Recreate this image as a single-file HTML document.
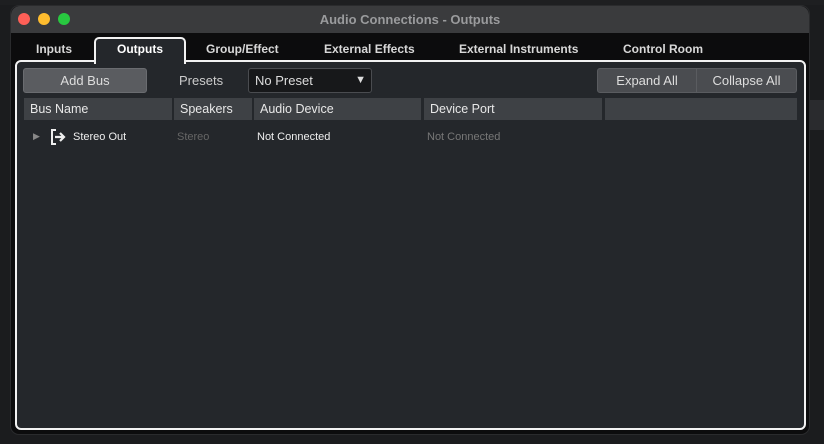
<!DOCTYPE html>
<html><head><style>
body{margin:0;width:824px;height:444px;background:#1b1c1e;font-family:"Liberation Sans",Arial,sans-serif;position:relative;overflow:hidden}
.a{position:absolute}
.win{left:10px;top:5px;width:798px;height:428px;background:#0c0c0d;border-radius:9px;border:1px solid #2a2b2d}
.title{left:11px;top:6px;width:798px;height:27px;background:#3a3b3d;border-radius:9px 9px 0 0;color:#9a9b9d;font-weight:bold;font-size:13px;text-align:center;line-height:27px}
.dot{width:12px;height:12px;border-radius:50%;top:13px}
.tab{top:42px;color:#d8d8d8;font-weight:bold;font-size:12px}
.panel{left:15px;top:60px;width:787px;height:366px;border:2px solid #f2f2f2;border-radius:6px;background:#24272b}
.otab{left:94px;top:37px;width:88px;height:25px;border:2px solid #f2f2f2;border-bottom:none;border-radius:5px 5px 0 0;background:#24272b;color:#fff;font-weight:bold;font-size:12px;text-align:center;line-height:20px;z-index:2}
.hd{top:98px;height:22px;background:#3e4145;color:#e8e8e8;font-size:12.5px;line-height:22px;padding-left:6px;box-sizing:border-box}
.btn{background:#4a4c50;border:1px solid #5a5c60;border-radius:3px;color:#ddd;font-size:13px;text-align:center;box-sizing:border-box}
.r{top:131px;font-size:11px}
</style></head><body>
<div class="a" style="left:0;top:0;width:824px;height:5px;background:#1e1f21"></div>
<div class="a" style="left:810px;top:100px;width:14px;height:30px;background:#2a2b2e"></div>
<div class="a win"></div>
<div class="a title">Audio Connections - Outputs</div>
<div class="a dot" style="left:18px;background:#fe5f57"></div>
<div class="a dot" style="left:38px;background:#febc2e"></div>
<div class="a dot" style="left:58px;background:#28c840"></div>
<div class="a tab" style="left:36px">Inputs</div>
<div class="a tab" style="left:206px">Group/Effect</div>
<div class="a tab" style="left:324px">External Effects</div>
<div class="a tab" style="left:459px">External Instruments</div>
<div class="a tab" style="left:623px">Control Room</div>
<div class="a panel"></div>
<div class="a otab">Outputs</div>
<div class="a" style="top:60px;height:3px;background:#24272b;z-index:3;left:96px;width:88px"></div>
<div class="a btn" style="left:23px;top:68px;width:124px;height:25px;line-height:23px;background:#5a5c60;border-color:#6a6c70">Add Bus</div>
<div class="a" style="left:179px;top:73px;color:#ccc;font-size:13px">Presets</div>
<div class="a" style="left:248px;top:68px;width:124px;height:25px;background:#17181a;border:1px solid #4a4c50;border-radius:3px;box-sizing:border-box;color:#ddd;font-size:13px;line-height:23px;padding-left:6px">No Preset<span style="position:absolute;right:5px;font-size:11px">▼</span></div>
<div class="a btn" style="left:597px;top:68px;width:100px;height:25px;line-height:23px;border-radius:3px 0 0 3px">Expand All</div>
<div class="a btn" style="left:696px;top:68px;width:101px;height:25px;line-height:23px;border-radius:0 3px 3px 0">Collapse All</div>
<div class="a hd" style="left:24px;width:148px">Bus Name</div>
<div class="a hd" style="left:174px;width:78px">Speakers</div>
<div class="a hd" style="left:254px;width:167px">Audio Device</div>
<div class="a hd" style="left:424px;width:178px">Device Port</div>
<div class="a hd" style="left:605px;width:192px"></div>
<div class="a" style="left:33px;top:131px;color:#888;font-size:9px">▶</div>
<svg class="a" style="left:49px;top:128px" width="20" height="18" viewBox="0 0 20 18"><path d="M7 2H3v14h4" fill="none" stroke="#eee" stroke-width="2"/><path d="M6 9h8M11 5l4 4-4 4" fill="none" stroke="#eee" stroke-width="2.2"/></svg>
<div class="a r" style="left:73px;color:#eee">Stereo Out</div>
<div class="a r" style="left:177px;color:#666">Stereo</div>
<div class="a r" style="left:257px;color:#eee">Not Connected</div>
<div class="a r" style="left:427px;color:#777">Not Connected</div>
</body></html>
